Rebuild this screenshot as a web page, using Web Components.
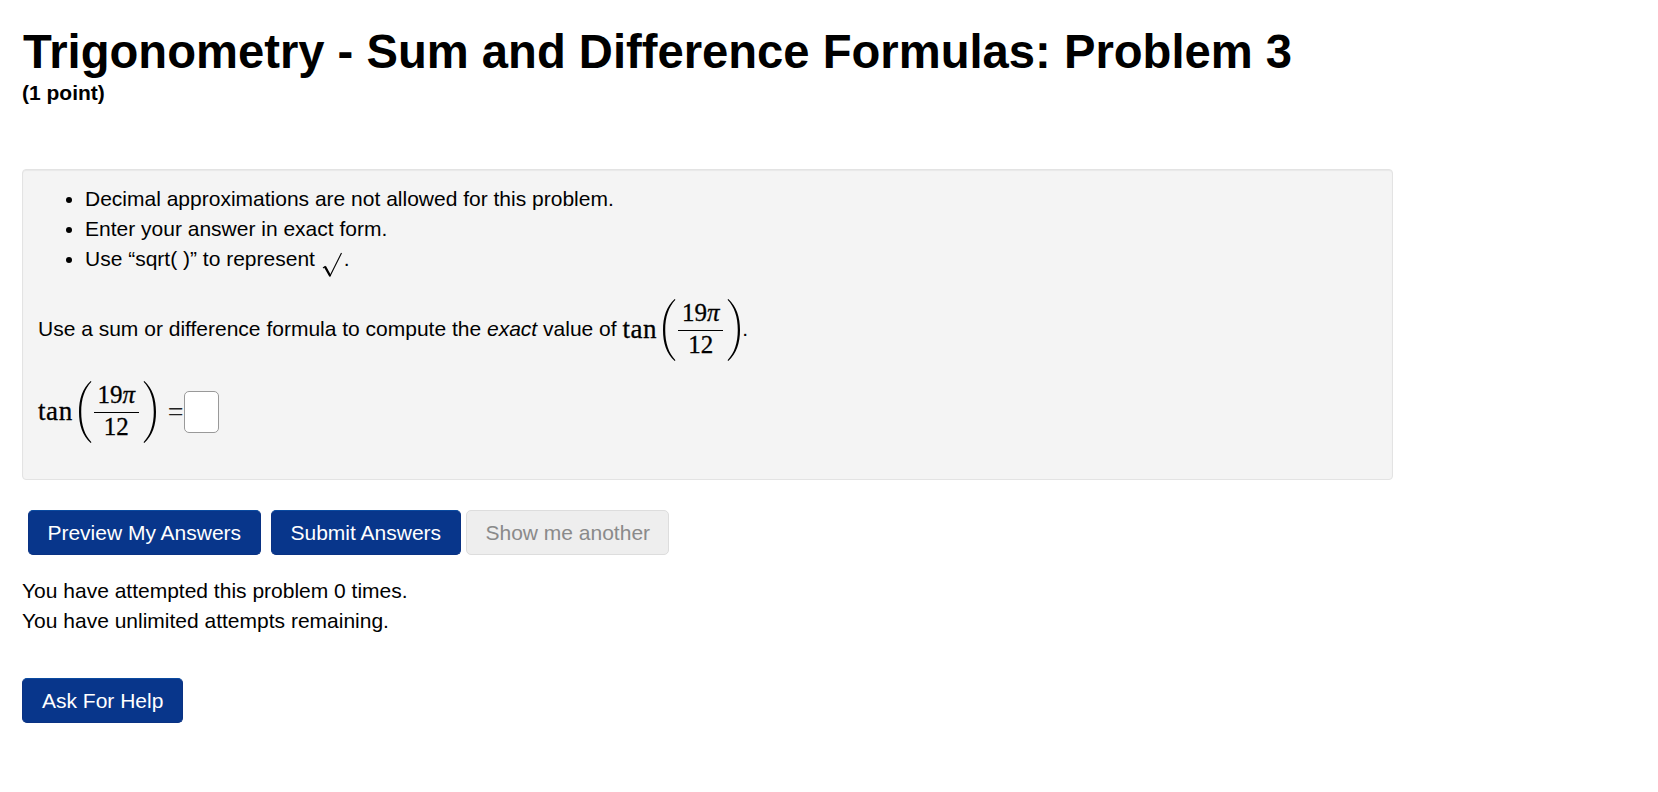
<!DOCTYPE html>
<html lang="en"><head><meta charset="utf-8"><title>Problem 3</title>
<style>
html,body{margin:0;padding:0;background:#fff;color:#000;font:21px/30px "Liberation Sans",Arial,sans-serif}
</style></head><body>
<x-page>
  <x-title slot="title" points="(1 point)">Trigonometry - Sum and Difference Formulas: Problem 3</x-title>
  <x-well slot="well">
    <x-hints>
      <li>Decimal approximations are not allowed for this problem.</li>
      <li>Enter your answer in exact form.</li>
      <li>Use “sqrt( )” to represent <x-sqrt></x-sqrt>.</li>
    </x-hints>
    <x-line class="q">Use a sum or difference formula to compute the <em>exact</em> value of <x-tan></x-tan>.</x-line>
    <x-line class="a"><x-tan></x-tan><x-eq>=</x-eq><x-answer></x-answer></x-line>
  </x-well>
  <x-actions slot="actions">
    <x-btn class="narrow">Preview My Answers</x-btn>
    <x-btn>Submit Answers</x-btn>
    <x-btn class="narrow" disabled>Show me another</x-btn>
  </x-actions>
  <x-attempts slot="attempts"><span>You have attempted this problem 0 times.</span><span>You have unlimited attempts remaining.</span></x-attempts>
  <x-help slot="help"><x-btn>Ask For Help</x-btn></x-help>
</x-page>
<script>
function def(name, css, html, extra){
  customElements.define(name, class extends HTMLElement{
    constructor(){super();const r=this.attachShadow({mode:'open'});r.innerHTML='<style>'+css+'</style>'+html;}
    connectedCallback(){ if(extra) extra(this); }
  });
}
def('x-page',':host{display:block;padding:0 22px}','<slot name="title"></slot><slot name="well"></slot><slot name="actions"></slot><slot name="attempts"></slot><slot name="help"></slot>');
def('x-title',`:host{display:block;padding-top:19px;height:169px;box-sizing:border-box}
h1{margin:0 0 0 1px;font:bold 47.2px/66px "Liberation Sans",Arial,sans-serif}
p{margin:-5px 0 0;font:bold 21px/26px "Liberation Sans",Arial,sans-serif}`,
'<h1><slot></slot></h1><p></p>',el=>{el.shadowRoot.querySelector('p').textContent=el.getAttribute('points')});
def('x-well',`:host{display:block;box-sizing:border-box;width:1371px;height:311px;background:#f4f4f4;border:1px solid #e3e3e3;border-radius:4px;box-shadow:inset 0 1px 1px rgba(0,0,0,.05);padding:14px 15px}`,'<slot></slot>');
def('x-hints',`:host{display:block;padding-left:47px;margin-bottom:22px}
::slotted(li){display:list-item;list-style:disc;height:30px}`,'<slot></slot>');
def('x-line',`:host{display:block;height:66px;line-height:66px;white-space:nowrap}
:host(.a){margin-top:16px}`,'<slot></slot>');
def('x-sqrt',`:host{display:inline-block;width:23px;height:30px;vertical-align:top}
svg{display:block;width:22px;height:30px;overflow:visible}`,
'<svg viewBox="0 0 22 30" aria-hidden="true"><path d="M2 24 L4 22.6 L9 32 L20.5 9" fill="none" stroke="#000" stroke-width="1.1"/><path d="M4 22.6 L9.2 32" fill="none" stroke="#000" stroke-width="2.2"/></svg>');
const paren=flip=>`<svg class="p" viewBox="0 0 14 62" preserveAspectRatio="none" ${flip?'style="transform:scaleX(-1)"':''} aria-hidden="true"><path d="M13.4 .8 C6 8 2.4 18 2.4 31 C2.4 44 6 54 13.4 61.2 L12.6 62 C3.6 54.5 0 44 0 31 C0 18 3.6 7.5 12.6 0 Z"/></svg>`;
def('x-tan',`:host{display:inline-flex;align-items:center;font:25px/30px "Liberation Serif","Times New Roman",serif;height:66px;vertical-align:middle;margin-right:2px}
.t{font-size:27px;letter-spacing:.6px;-webkit-text-stroke:.3px #000;margin-right:6px;position:relative;top:-1px}
svg.p{width:13px;height:62px;fill:#000;display:block}
.f{display:flex;flex-direction:column;align-items:center;width:45px;margin:0 4px 0 2px}
.n,.d{height:29px;-webkit-text-stroke:.3px #000}
.d{line-height:27px}
.n{line-height:23px;border-bottom:1.3px solid #000;width:100%;text-align:center}
i{font-style:italic}`,
`<span class="t">tan</span>${paren(false)}<span class="f"><span class="n">19<i>π</i></span><span class="d">12</span></span>${paren(true)}`);
def('x-eq',`:host{display:inline-block;font:28px/30px "Liberation Serif",serif;margin:0 0 0 10px;vertical-align:middle;color:#222}`,'<slot></slot>');
def('x-answer',`:host{display:inline-block;box-sizing:border-box;width:35px;height:42px;background:#fff;border:1px solid #999;border-radius:5px;vertical-align:middle}`,'');
def('x-actions',`:host{display:flex;margin:30px 0 0 6px;height:45px}
::slotted(x-btn:nth-child(1)){margin-right:10px}
::slotted(x-btn:nth-child(2)){margin-right:5px}`,'<slot></slot>');
def('x-btn',`:host{display:inline-flex;align-items:center;box-sizing:border-box;height:45px;padding:0 19px;background:#08368b;color:#fff;border:1px solid #0a3283;border-top-color:#0a4aa0;border-radius:5px;font:21px/30px "Liberation Sans",Arial,sans-serif;white-space:nowrap}
:host(.narrow){padding:0 18.4px}
:host([disabled]){background:#eee;color:#8a8a8a;border-color:#ddd}`,'<slot></slot>');
def('x-attempts',`:host{display:block;margin-top:21px}
::slotted(span){display:block;height:30px}`,'<slot></slot>');
def('x-help',`:host{display:block;margin-top:42px}`,'<slot></slot>');
</script>
</body></html>
